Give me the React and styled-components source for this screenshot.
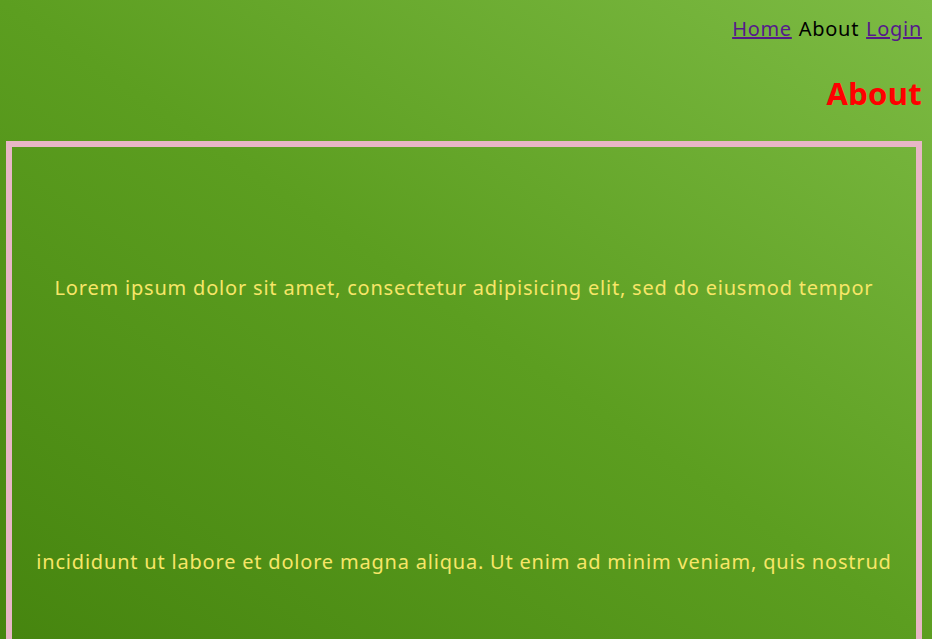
import React from 'react';
import styled, { createGlobalStyle } from 'styled-components';

const Global = createGlobalStyle`
  html, body {
    margin: 0;
    padding: 0;
    min-height: 100%;
  }
  body {
    font-family: "Noto Sans", "Open Sans", sans-serif;
    background: linear-gradient(to top right, #46850f 0%, #5c9e20 50%, #7dbb44 100%);
    background-attachment: fixed;
    min-height: 100vh;
  }
`;

const Page = styled.div`
  min-height: 100vh;
  padding: 14px 10px 0 6px;
  box-sizing: border-box;
`;

const Nav = styled.nav`
  display: flex;
  justify-content: flex-end;
  gap: 7px;
  font-size: 20px;
  line-height: 30px;
  letter-spacing: 0.7px;
  a {
    color: #551a8b;
    text-decoration: underline;
  }
  span {
    color: #000;
  }
`;

const Title = styled.h2`
  margin: 29px 0 0;
  text-align: right;
  color: #ff0000;
  font-size: 31px;
  line-height: 40px;
  font-weight: 700;
  letter-spacing: 0.3px;
`;

const Box = styled.section`
  margin-top: 28px;
  border: 6px solid #e8b6c6;
  border-bottom: none;
  min-height: 490px;
  padding: 4px 10px 0;
`;

const Text = styled.p`
  margin: 0;
  color: #f7e668;
  font-size: 20px;
  letter-spacing: 0.8px;
  text-align: center;
  span {
    display: block;
    line-height: 274px;
  }
`;

export default function App() {
  return (
    <>
      <Global />
      <Page>
        <Nav>
          <a href="#home">Home</a>
          <span>About</span>
          <a href="#login">Login</a>
        </Nav>
        <Title>About</Title>
        <Box>
          <Text>
            <span>Lorem ipsum dolor sit amet, consectetur adipisicing elit, sed do eiusmod tempor</span>
            <span>incididunt ut labore et dolore magna aliqua. Ut enim ad minim veniam, quis nostrud</span>
          </Text>
        </Box>
      </Page>
    </>
  );
}
